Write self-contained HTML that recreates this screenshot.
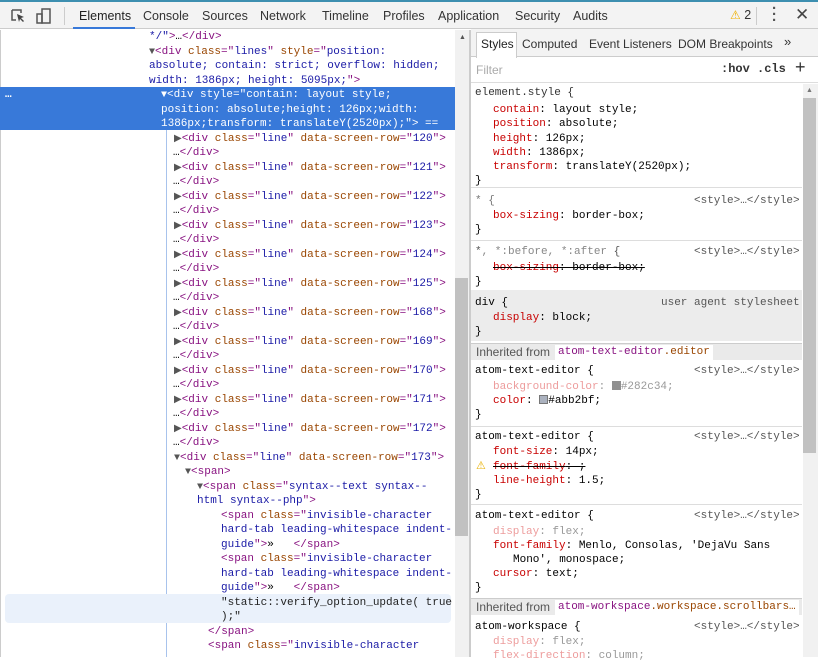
<!DOCTYPE html>
<html><head><meta charset="utf-8"><style>
*{margin:0;padding:0;box-sizing:border-box}
body{width:818px;height:657px;overflow:hidden;background:#fff;position:relative;font-family:"Liberation Sans",sans-serif}
.top{position:absolute;left:0;top:0;width:818px;height:2px;background:#3d8fb0}
.tb{position:absolute;left:0;top:2px;width:818px;height:27px;background:#f3f3f3;border-bottom:1px solid #ccc}
.tab{position:absolute;top:7px;font-size:12.5px;color:#333}
.m{font-family:"Liberation Mono",monospace;font-size:11px;white-space:pre;position:absolute;line-height:14.5px;height:14.5px;margin-top:2px}
.t{color:#881280}.a{color:#994500}.v{color:#1a1aa6}.k{color:#222}
.ar{font-size:10px;color:#555}
.sel{position:absolute;left:0;top:87px;width:455px;height:43px;background:#3879d9}
.p{color:#c80000}.g{color:#888}.d{color:#ed9c9c}.dg{color:#999}
.rs{position:absolute;left:471px;width:331px;border-top:1px solid #ddd}
.inh{position:absolute;left:471px;width:331px;height:17px;background:#eaeaea;font-size:12px;color:#555;border-top:1px solid #ccc}
.inh .b{position:absolute;left:84px;top:1px;height:15px;background:#fff;padding:0 3px;font-family:"Liberation Mono",monospace;font-size:11px;line-height:15px}
</style></head><body>
<div class="top"></div>
<div class="tb">
<svg style="position:absolute;left:10px;top:6px" width="16" height="16"><path d="M2 2h9v3M2 2v10h4" fill="none" stroke="#555" stroke-width="1.5"/><path d="M7 6l7 3-3 1 3 3-1 1-3-3-1 3z" fill="#444"/></svg>
<svg style="position:absolute;left:36px;top:6px" width="16" height="16"><rect x="6" y="1" width="8" height="14" fill="none" stroke="#555" stroke-width="1.5"/><rect x="1" y="6" width="5" height="9" fill="none" stroke="#555" stroke-width="1.5"/></svg>
<div style="position:absolute;left:64px;top:5px;width:1px;height:18px;background:#ccc"></div>
<div class="tab" style="left:79px;color:#222">Elements</div>
<div style="position:absolute;left:73px;top:25px;width:62px;height:2px;background:#3879d9"></div>
<div class="tab" style="left:143px">Console</div>
<div class="tab" style="left:202px">Sources</div>
<div class="tab" style="left:260px">Network</div>
<div class="tab" style="left:322px">Timeline</div>
<div class="tab" style="left:383px">Profiles</div>
<div class="tab" style="left:438px">Application</div>
<div class="tab" style="left:515px">Security</div>
<div class="tab" style="left:573px">Audits</div>
<div style="position:absolute;left:730px;top:6px;color:#f0b000;font-size:12px">⚠<span style="color:#333;font-size:12.5px"> 2</span></div>
<div style="position:absolute;left:756px;top:5px;width:1px;height:18px;background:#ccc"></div>
<div style="position:absolute;left:772px;top:4px;font-size:15px;font-weight:bold;color:#555;line-height:6px">·<br>·<br>·</div>
<div style="position:absolute;left:795px;top:3px;font-size:17px;color:#444">✕</div>
</div>
<div style="position:absolute;left:0;top:30px;width:1px;height:627px;background:#ccc"></div>
<div style="position:absolute;left:455px;top:30px;width:14px;height:627px;background:#f1f1f1"></div>
<div style="position:absolute;left:455px;top:278px;width:13px;height:258px;background:#c1c1c1"></div>
<div style="position:absolute;left:459px;top:34px;font-size:7px;color:#555">▲</div>
<div style="position:absolute;left:469px;top:30px;width:2px;height:627px;background:#ccc"></div>
<div style="position:absolute;left:166px;top:130px;width:1px;height:527px;background:#a8c3ec"></div>
<div style="position:absolute;left:5px;top:594px;width:446px;height:29px;background:#eaf1fb;border-radius:4px"></div>
<div class="sel"></div>

<div class="m" style="left:149px;top:28px"><span class="v">*/"</span><span class="t">&gt;</span>…<span class="t">&lt;/div&gt;</span></div>
<div class="m" style="left:149px;top:42.5px"><span class="ar">▼</span><span class="t">&lt;div </span><span class="a">class</span><span class="t">="</span><span class="v">lines</span><span class="t">" </span><span class="a">style</span><span class="t">="</span><span class="v">position:</span></div>
<div class="m v" style="left:149px;top:57px">absolute; contain: strict; overflow: hidden;</div>
<div class="m" style="left:149px;top:71.5px"><span class="v">width: 1386px; height: 5095px;</span><span class="t">"&gt;</span></div>
<div class="m" style="left:5px;top:86px;color:#fff;font-weight:bold">…</div>
<div class="m" style="left:161px;top:86px;color:#fff"><span class="ar" style="color:#fff">▼</span>&lt;div style="contain: layout style;</div>
<div class="m" style="left:161px;top:100.5px;color:#fff">position: absolute;height: 126px;width:</div>
<div class="m" style="left:161px;top:115px;color:#fff">1386px;transform: translateY(2520px);"&gt; ==</div>

<div class="m" style="left:174px;top:129.5px"><span class="ar">▶</span><span class="t">&lt;div </span><span class="a">class</span><span class="t">="</span><span class="v">line</span><span class="t">" </span><span class="a">data-screen-row</span><span class="t">="</span><span class="v">120</span><span class="t">"&gt;</span></div>
<div class="m" style="left:173px;top:144px">…<span class="t">&lt;/div&gt;</span></div>
<div class="m" style="left:174px;top:158.5px"><span class="ar">▶</span><span class="t">&lt;div </span><span class="a">class</span><span class="t">="</span><span class="v">line</span><span class="t">" </span><span class="a">data-screen-row</span><span class="t">="</span><span class="v">121</span><span class="t">"&gt;</span></div>
<div class="m" style="left:173px;top:173px">…<span class="t">&lt;/div&gt;</span></div>
<div class="m" style="left:174px;top:187.5px"><span class="ar">▶</span><span class="t">&lt;div </span><span class="a">class</span><span class="t">="</span><span class="v">line</span><span class="t">" </span><span class="a">data-screen-row</span><span class="t">="</span><span class="v">122</span><span class="t">"&gt;</span></div>
<div class="m" style="left:173px;top:202px">…<span class="t">&lt;/div&gt;</span></div>
<div class="m" style="left:174px;top:216.5px"><span class="ar">▶</span><span class="t">&lt;div </span><span class="a">class</span><span class="t">="</span><span class="v">line</span><span class="t">" </span><span class="a">data-screen-row</span><span class="t">="</span><span class="v">123</span><span class="t">"&gt;</span></div>
<div class="m" style="left:173px;top:231px">…<span class="t">&lt;/div&gt;</span></div>
<div class="m" style="left:174px;top:245.5px"><span class="ar">▶</span><span class="t">&lt;div </span><span class="a">class</span><span class="t">="</span><span class="v">line</span><span class="t">" </span><span class="a">data-screen-row</span><span class="t">="</span><span class="v">124</span><span class="t">"&gt;</span></div>
<div class="m" style="left:173px;top:260px">…<span class="t">&lt;/div&gt;</span></div>
<div class="m" style="left:174px;top:274.5px"><span class="ar">▶</span><span class="t">&lt;div </span><span class="a">class</span><span class="t">="</span><span class="v">line</span><span class="t">" </span><span class="a">data-screen-row</span><span class="t">="</span><span class="v">125</span><span class="t">"&gt;</span></div>
<div class="m" style="left:173px;top:289px">…<span class="t">&lt;/div&gt;</span></div>
<div class="m" style="left:174px;top:303.5px"><span class="ar">▶</span><span class="t">&lt;div </span><span class="a">class</span><span class="t">="</span><span class="v">line</span><span class="t">" </span><span class="a">data-screen-row</span><span class="t">="</span><span class="v">168</span><span class="t">"&gt;</span></div>
<div class="m" style="left:173px;top:318px">…<span class="t">&lt;/div&gt;</span></div>
<div class="m" style="left:174px;top:332.5px"><span class="ar">▶</span><span class="t">&lt;div </span><span class="a">class</span><span class="t">="</span><span class="v">line</span><span class="t">" </span><span class="a">data-screen-row</span><span class="t">="</span><span class="v">169</span><span class="t">"&gt;</span></div>
<div class="m" style="left:173px;top:347px">…<span class="t">&lt;/div&gt;</span></div>
<div class="m" style="left:174px;top:361.5px"><span class="ar">▶</span><span class="t">&lt;div </span><span class="a">class</span><span class="t">="</span><span class="v">line</span><span class="t">" </span><span class="a">data-screen-row</span><span class="t">="</span><span class="v">170</span><span class="t">"&gt;</span></div>
<div class="m" style="left:173px;top:376px">…<span class="t">&lt;/div&gt;</span></div>
<div class="m" style="left:174px;top:390.5px"><span class="ar">▶</span><span class="t">&lt;div </span><span class="a">class</span><span class="t">="</span><span class="v">line</span><span class="t">" </span><span class="a">data-screen-row</span><span class="t">="</span><span class="v">171</span><span class="t">"&gt;</span></div>
<div class="m" style="left:173px;top:405px">…<span class="t">&lt;/div&gt;</span></div>
<div class="m" style="left:174px;top:419.5px"><span class="ar">▶</span><span class="t">&lt;div </span><span class="a">class</span><span class="t">="</span><span class="v">line</span><span class="t">" </span><span class="a">data-screen-row</span><span class="t">="</span><span class="v">172</span><span class="t">"&gt;</span></div>
<div class="m" style="left:173px;top:434px">…<span class="t">&lt;/div&gt;</span></div>
<div class="m" style="left:174px;top:448.5px"><span class="ar">▼</span><span class="t">&lt;div </span><span class="a">class</span><span class="t">="</span><span class="v">line</span><span class="t">" </span><span class="a">data-screen-row</span><span class="t">="</span><span class="v">173</span><span class="t">"&gt;</span></div>
<div class="m" style="left:185px;top:463px"><span class="ar">▼</span><span class="t">&lt;span&gt;</span></div>
<div class="m" style="left:197px;top:477.5px"><span class="ar">▼</span><span class="t">&lt;span </span><span class="a">class</span><span class="t">="</span><span class="v">syntax--text syntax--</span></div>
<div class="m v" style="left:197px;top:492px">html syntax--php<span class="t">"&gt;</span></div>
<div class="m" style="left:221px;top:506.5px"><span class="t">&lt;span </span><span class="a">class</span><span class="t">="</span><span class="v">invisible-character</span></div>
<div class="m v" style="left:221px;top:521px">hard-tab leading-whitespace indent-</div>
<div class="m" style="left:221px;top:535.5px"><span class="v">guide</span><span class="t">"&gt;</span>»   <span class="t">&lt;/span&gt;</span></div>
<div class="m" style="left:221px;top:550px"><span class="t">&lt;span </span><span class="a">class</span><span class="t">="</span><span class="v">invisible-character</span></div>
<div class="m v" style="left:221px;top:564.5px">hard-tab leading-whitespace indent-</div>
<div class="m" style="left:221px;top:579px"><span class="v">guide</span><span class="t">"&gt;</span>»   <span class="t">&lt;/span&gt;</span></div>
<div class="m k" style="left:221px;top:593.5px">"static::verify_option_update( true</div>
<div class="m k" style="left:221px;top:608px">);"</div>
<div class="m t" style="left:208px;top:622.5px">&lt;/span&gt;</div>
<div class="m" style="left:208px;top:637px"><span class="t">&lt;span </span><span class="a">class</span><span class="t">="</span><span class="v">invisible-character</span></div>

<div style="position:absolute;left:471px;top:29px;width:347px;height:28px;background:#f3f3f3;border-bottom:1px solid #ccc"></div>
<div style="position:absolute;left:476px;top:32px;width:41px;height:26px;background:#fff;border:1px solid #ccc;border-bottom:none"></div>
<div class="tab" style="left:481px;top:37px;color:#222;font-size:12px">Styles</div>
<div class="tab" style="left:522px;top:37px;font-size:12px">Computed</div>
<div class="tab" style="left:589px;top:37px;font-size:12px">Event Listeners</div>
<div class="tab" style="left:678px;top:37px;font-size:12px">DOM Breakpoints</div>
<div class="tab" style="left:784px;top:34px;font-size:13px">»</div>
<div style="position:absolute;left:471px;top:57px;width:347px;height:26px;border-bottom:1px solid #ddd"></div>
<div style="position:absolute;left:476px;top:63px;font-size:12px;color:#aaa">Filter</div>
<div style="position:absolute;left:721px;top:62px;font-size:12px;color:#333;font-family:'Liberation Mono',monospace;font-weight:bold">:hov</div>
<div style="position:absolute;left:757px;top:62px;font-size:12px;color:#333;font-family:'Liberation Mono',monospace;font-weight:bold">.cls</div>
<div style="position:absolute;left:795px;top:57px;font-size:18px;color:#333">+</div>
<div style="position:absolute;left:803px;top:84px;width:15px;height:573px;background:#f1f1f1"></div>
<div style="position:absolute;left:803px;top:98px;width:13px;height:355px;background:#c1c1c1"></div>
<div style="position:absolute;left:806px;top:87px;font-size:7px;color:#777">▲</div>

<div class="m g" style="left:475px;top:84px;color:#333">element.style {</div>
<div class="m" style="left:493px;top:101px"><span class="p">contain</span>: layout style;</div>
<div class="m" style="left:493px;top:115px"><span class="p">position</span>: absolute;</div>
<div class="m" style="left:493px;top:130px"><span class="p">height</span>: 126px;</div>
<div class="m" style="left:493px;top:144px"><span class="p">width</span>: 1386px;</div>
<div class="m" style="left:493px;top:158px"><span class="p">transform</span>: translateY(2520px);</div>
<div class="m" style="left:475px;top:172px">}</div>

<div class="rs" style="top:187px"></div>
<div class="m" style="left:475px;top:192px;color:#777">* {</div>
<div class="m" style="left:694px;top:192px;color:#555">&lt;style&gt;…&lt;/style&gt;</div>
<div class="m" style="left:493px;top:207px"><span class="p">box-sizing</span>: border-box;</div>
<div class="m" style="left:475px;top:221px">}</div>

<div class="rs" style="top:240px"></div>
<div class="m" style="left:475px;top:243px;color:#888"><span style="color:#555">*</span>, *:before, *:after <span style="color:#555">{</span></div>
<div class="m" style="left:694px;top:243px;color:#555">&lt;style&gt;…&lt;/style&gt;</div>
<div class="m" style="left:493px;top:259px;text-decoration:line-through"><span class="p">box-sizing</span>: border-box;</div>
<div class="m" style="left:475px;top:273px">}</div>

<div style="position:absolute;left:471px;top:290px;width:331px;height:51px;background:#ececec"></div>
<div class="m" style="left:475px;top:294px">div {</div>
<div class="m" style="left:661px;top:294px;color:#555">user agent stylesheet</div>
<div class="m" style="left:493px;top:309px"><span class="p">display</span>: block;</div>
<div class="m" style="left:475px;top:323px">}</div>

<div class="inh" style="top:343px"><span style="position:absolute;left:5px;top:1px">Inherited from</span><span class="b"><span class="t">atom-text-editor</span><span class="a">.editor</span></span></div>
<div class="m" style="left:475px;top:362px">atom-text-editor {</div>
<div class="m" style="left:694px;top:362px;color:#555">&lt;style&gt;…&lt;/style&gt;</div>
<div class="m d" style="left:493px;top:378px">background-color<span class="dg">: <span style="display:inline-block;width:9px;height:9px;background:#909090;vertical-align:-1px"></span>#282c34;</span></div>
<div class="m" style="left:493px;top:392px"><span class="p">color</span>: <span style="display:inline-block;width:9px;height:9px;background:#abb2bf;border:1px solid #777;vertical-align:-1px"></span>#abb2bf;</div>
<div class="m" style="left:475px;top:406px">}</div>

<div class="rs" style="top:426px"></div>
<div class="m" style="left:475px;top:428px">atom-text-editor {</div>
<div class="m" style="left:694px;top:428px;color:#555">&lt;style&gt;…&lt;/style&gt;</div>
<div class="m" style="left:493px;top:443px"><span class="p">font-size</span>: 14px;</div>
<div class="m" style="left:476px;top:458px;color:#e8b000;font-size:11px">⚠</div>
<div class="m" style="left:493px;top:458px;text-decoration:line-through"><span class="p">font-family</span>: ;</div>
<div class="m" style="left:493px;top:472px"><span class="p">line-height</span>: 1.5;</div>
<div class="m" style="left:475px;top:486px">}</div>

<div class="rs" style="top:504px"></div>
<div class="m" style="left:475px;top:507px">atom-text-editor {</div>
<div class="m" style="left:694px;top:507px;color:#555">&lt;style&gt;…&lt;/style&gt;</div>
<div class="m d" style="left:493px;top:523px">display<span class="dg">: flex;</span></div>
<div class="m" style="left:493px;top:537px"><span class="p">font-family</span>: Menlo, Consolas, 'DejaVu Sans</div>
<div class="m" style="left:513px;top:551px">Mono', monospace;</div>
<div class="m" style="left:493px;top:565px"><span class="p">cursor</span>: text;</div>
<div class="m" style="left:475px;top:579px">}</div>

<div class="inh" style="top:598px"><span style="position:absolute;left:5px;top:1px">Inherited from</span><span class="b" style="width:244px;overflow:hidden"><span class="t">atom-workspace</span><span class="a">.workspace.scrollbars…</span></span></div>
<div class="m" style="left:475px;top:618px">atom-workspace {</div>
<div class="m" style="left:694px;top:618px;color:#555">&lt;style&gt;…&lt;/style&gt;</div>
<div class="m d" style="left:493px;top:633px">display<span class="dg">: flex;</span></div>
<div class="m d" style="left:493px;top:647px">flex-direction<span class="dg">: column;</span></div>
</body></html>
